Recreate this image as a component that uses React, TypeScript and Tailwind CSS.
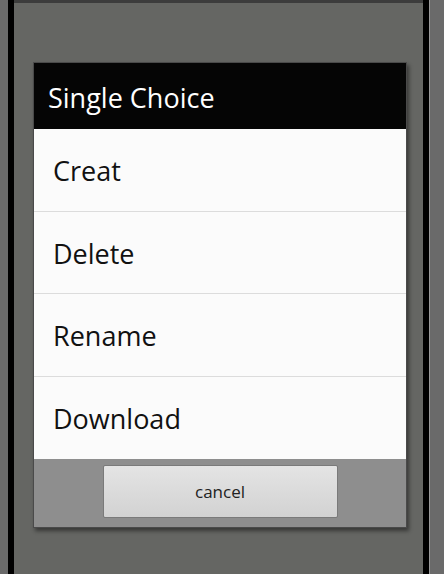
import React from 'react';

const ITEMS = ['Creat', 'Delete', 'Rename', 'Download'] as const;

const FONT = "font-['Open_Sans','Noto_Sans',sans-serif]";

export default function App() {
  return (
    <div className={`flex h-[574px] w-[444px] bg-[#6a6a6a] ${FONT}`}>
      <div className="ml-[8px] flex h-full w-[421px] border-x-[6px] border-black bg-[#656663]">
        <div className="flex w-full flex-col">
          <div className="h-[3px] bg-[#3c3c3c]" />
          <div className="pl-[19px] pt-[59px]">
            <div className="w-[374px] border border-[#4a4a4a] shadow-[2px_3px_4px_rgba(0,0,0,0.45)]">
              <div className="flex h-[66px] items-center bg-[#050505] pl-[14px] pt-[4px] text-[27px] text-white">
                Single Choice
              </div>
              <ul className="bg-[#fbfbfb]">
                {ITEMS.map((item, i) => (
                  <li
                    key={item}
                    className={`flex h-[82.5px] items-center pl-[19px] pt-[3px] text-[27px] text-[#111] ${
                      i < ITEMS.length - 1 ? 'border-b border-[#dcdcdc]' : ''
                    }`}
                  >
                    {item}
                  </li>
                ))}
              </ul>
              <div className="flex h-[68px] items-start justify-center bg-[#8e8e8e] pt-[6px]">
                <button
                  type="button"
                  className="h-[53px] w-[235px] rounded-[2px] border border-[#7a7a7a] bg-gradient-to-b from-[#e4e4e4] to-[#d2d2d2] pt-[1px] text-[17px] text-[#222]"
                >
                  cancel
                </button>
              </div>
            </div>
          </div>
        </div>
      </div>
      <div className="h-full w-[1px] bg-[#9a9a9a]" />
    </div>
  );
}
